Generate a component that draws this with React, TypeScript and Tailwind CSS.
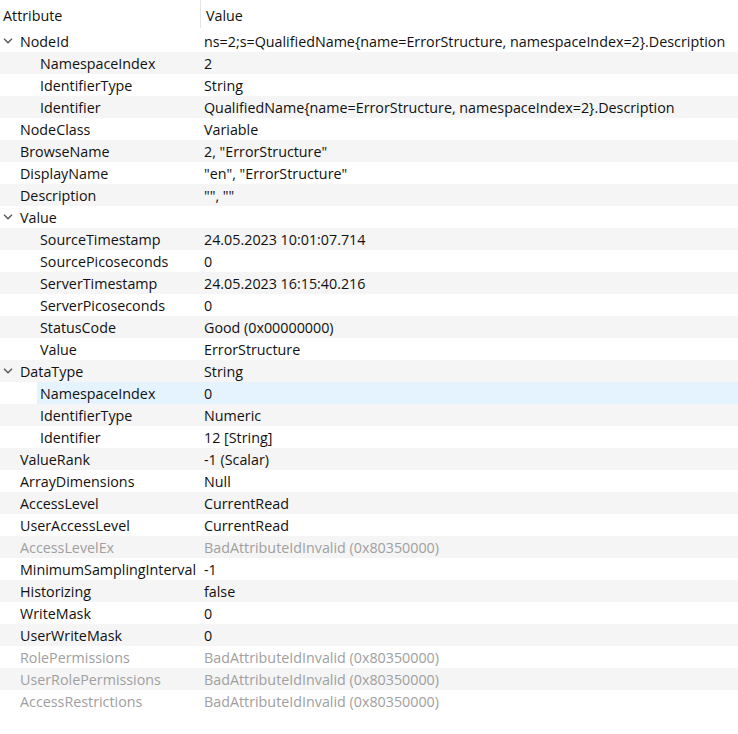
import React from 'react';

type Row = {
  name: string;
  value: string;
  level: 0 | 1;
  expandable?: boolean;
  disabled?: boolean;
  selected?: boolean;
};

const rows: Row[] = [
  { name: 'NodeId', value: 'ns=2;s=QualifiedName{name=ErrorStructure, namespaceIndex=2}.Description', level: 0, expandable: true },
  { name: 'NamespaceIndex', value: '2', level: 1 },
  { name: 'IdentifierType', value: 'String', level: 1 },
  { name: 'Identifier', value: 'QualifiedName{name=ErrorStructure, namespaceIndex=2}.Description', level: 1 },
  { name: 'NodeClass', value: 'Variable', level: 0 },
  { name: 'BrowseName', value: '2, "ErrorStructure"', level: 0 },
  { name: 'DisplayName', value: '"en", "ErrorStructure"', level: 0 },
  { name: 'Description', value: '"", ""', level: 0 },
  { name: 'Value', value: '', level: 0, expandable: true },
  { name: 'SourceTimestamp', value: '24.05.2023 10:01:07.714', level: 1 },
  { name: 'SourcePicoseconds', value: '0', level: 1 },
  { name: 'ServerTimestamp', value: '24.05.2023 16:15:40.216', level: 1 },
  { name: 'ServerPicoseconds', value: '0', level: 1 },
  { name: 'StatusCode', value: 'Good (0x00000000)', level: 1 },
  { name: 'Value', value: 'ErrorStructure', level: 1 },
  { name: 'DataType', value: 'String', level: 0, expandable: true },
  { name: 'NamespaceIndex', value: '0', level: 1, selected: true },
  { name: 'IdentifierType', value: 'Numeric', level: 1 },
  { name: 'Identifier', value: '12 [String]', level: 1 },
  { name: 'ValueRank', value: '-1 (Scalar)', level: 0 },
  { name: 'ArrayDimensions', value: 'Null', level: 0 },
  { name: 'AccessLevel', value: 'CurrentRead', level: 0 },
  { name: 'UserAccessLevel', value: 'CurrentRead', level: 0 },
  { name: 'AccessLevelEx', value: 'BadAttributeIdInvalid (0x80350000)', level: 0, disabled: true },
  { name: 'MinimumSamplingInterval', value: '-1', level: 0 },
  { name: 'Historizing', value: 'false', level: 0 },
  { name: 'WriteMask', value: '0', level: 0 },
  { name: 'UserWriteMask', value: '0', level: 0 },
  { name: 'RolePermissions', value: 'BadAttributeIdInvalid (0x80350000)', level: 0, disabled: true },
  { name: 'UserRolePermissions', value: 'BadAttributeIdInvalid (0x80350000)', level: 0, disabled: true },
  { name: 'AccessRestrictions', value: 'BadAttributeIdInvalid (0x80350000)', level: 0, disabled: true },
];

function Chevron() {
  return (
    <svg width="10" height="6" viewBox="0 0 10 6" className="ml-[3px] mr-[7px] shrink-0">
      <polyline points="1,0.8 5,4.8 9,0.8" fill="none" stroke="#5a5a5a" strokeWidth="1.5" />
    </svg>
  );
}

function TreeRow({ row, index }: { row: Row; index: number }) {
  const stripe = index % 2 === 1 ? 'bg-[#f5f5f5]' : 'bg-white';
  const text = row.disabled ? 'text-[#a0a0a0]' : 'text-[#111]';

  return (
    <div className={`flex h-[22px] items-center ${stripe} ${text}`}>
      {row.level === 0 ? (
        <div className="flex w-[200px] shrink-0 items-center">
          {row.expandable ? <Chevron /> : <span className="w-[20px] shrink-0" />}
          <span className="whitespace-nowrap pt-[2px]">{row.name}</span>
        </div>
      ) : (
        <span className="w-[37px] shrink-0 self-stretch" />
      )}
      <div className={`flex flex-1 items-center self-stretch ${row.selected ? 'bg-[#e5f3ff]' : ''}`}>
        {row.level === 1 && (
          <span className="w-[163px] shrink-0 whitespace-nowrap pl-[3px] pt-[2px]">{row.name}</span>
        )}
        <span className="whitespace-nowrap pl-[4px] pt-[2px]">{row.value}</span>
      </div>
    </div>
  );
}

export default function App() {
  return (
    <div
      className="h-[734px] w-[738px] overflow-hidden bg-white text-[14.3px]"
      style={{ fontFamily: '"Open Sans", "Noto Sans", sans-serif' }}
    >
      <div className="flex h-[30px] items-center text-[#111]">
        <div className="w-[200px] shrink-0 pl-[3px] pt-[2px]">Attribute</div>
        <div className="h-[28px] w-px self-start bg-[#e5e5e5]" />
        <div className="pl-[5px] pt-[2px]">Value</div>
      </div>
      {rows.map((row, i) => (
        <TreeRow key={i} row={row} index={i} />
      ))}
    </div>
  );
}
